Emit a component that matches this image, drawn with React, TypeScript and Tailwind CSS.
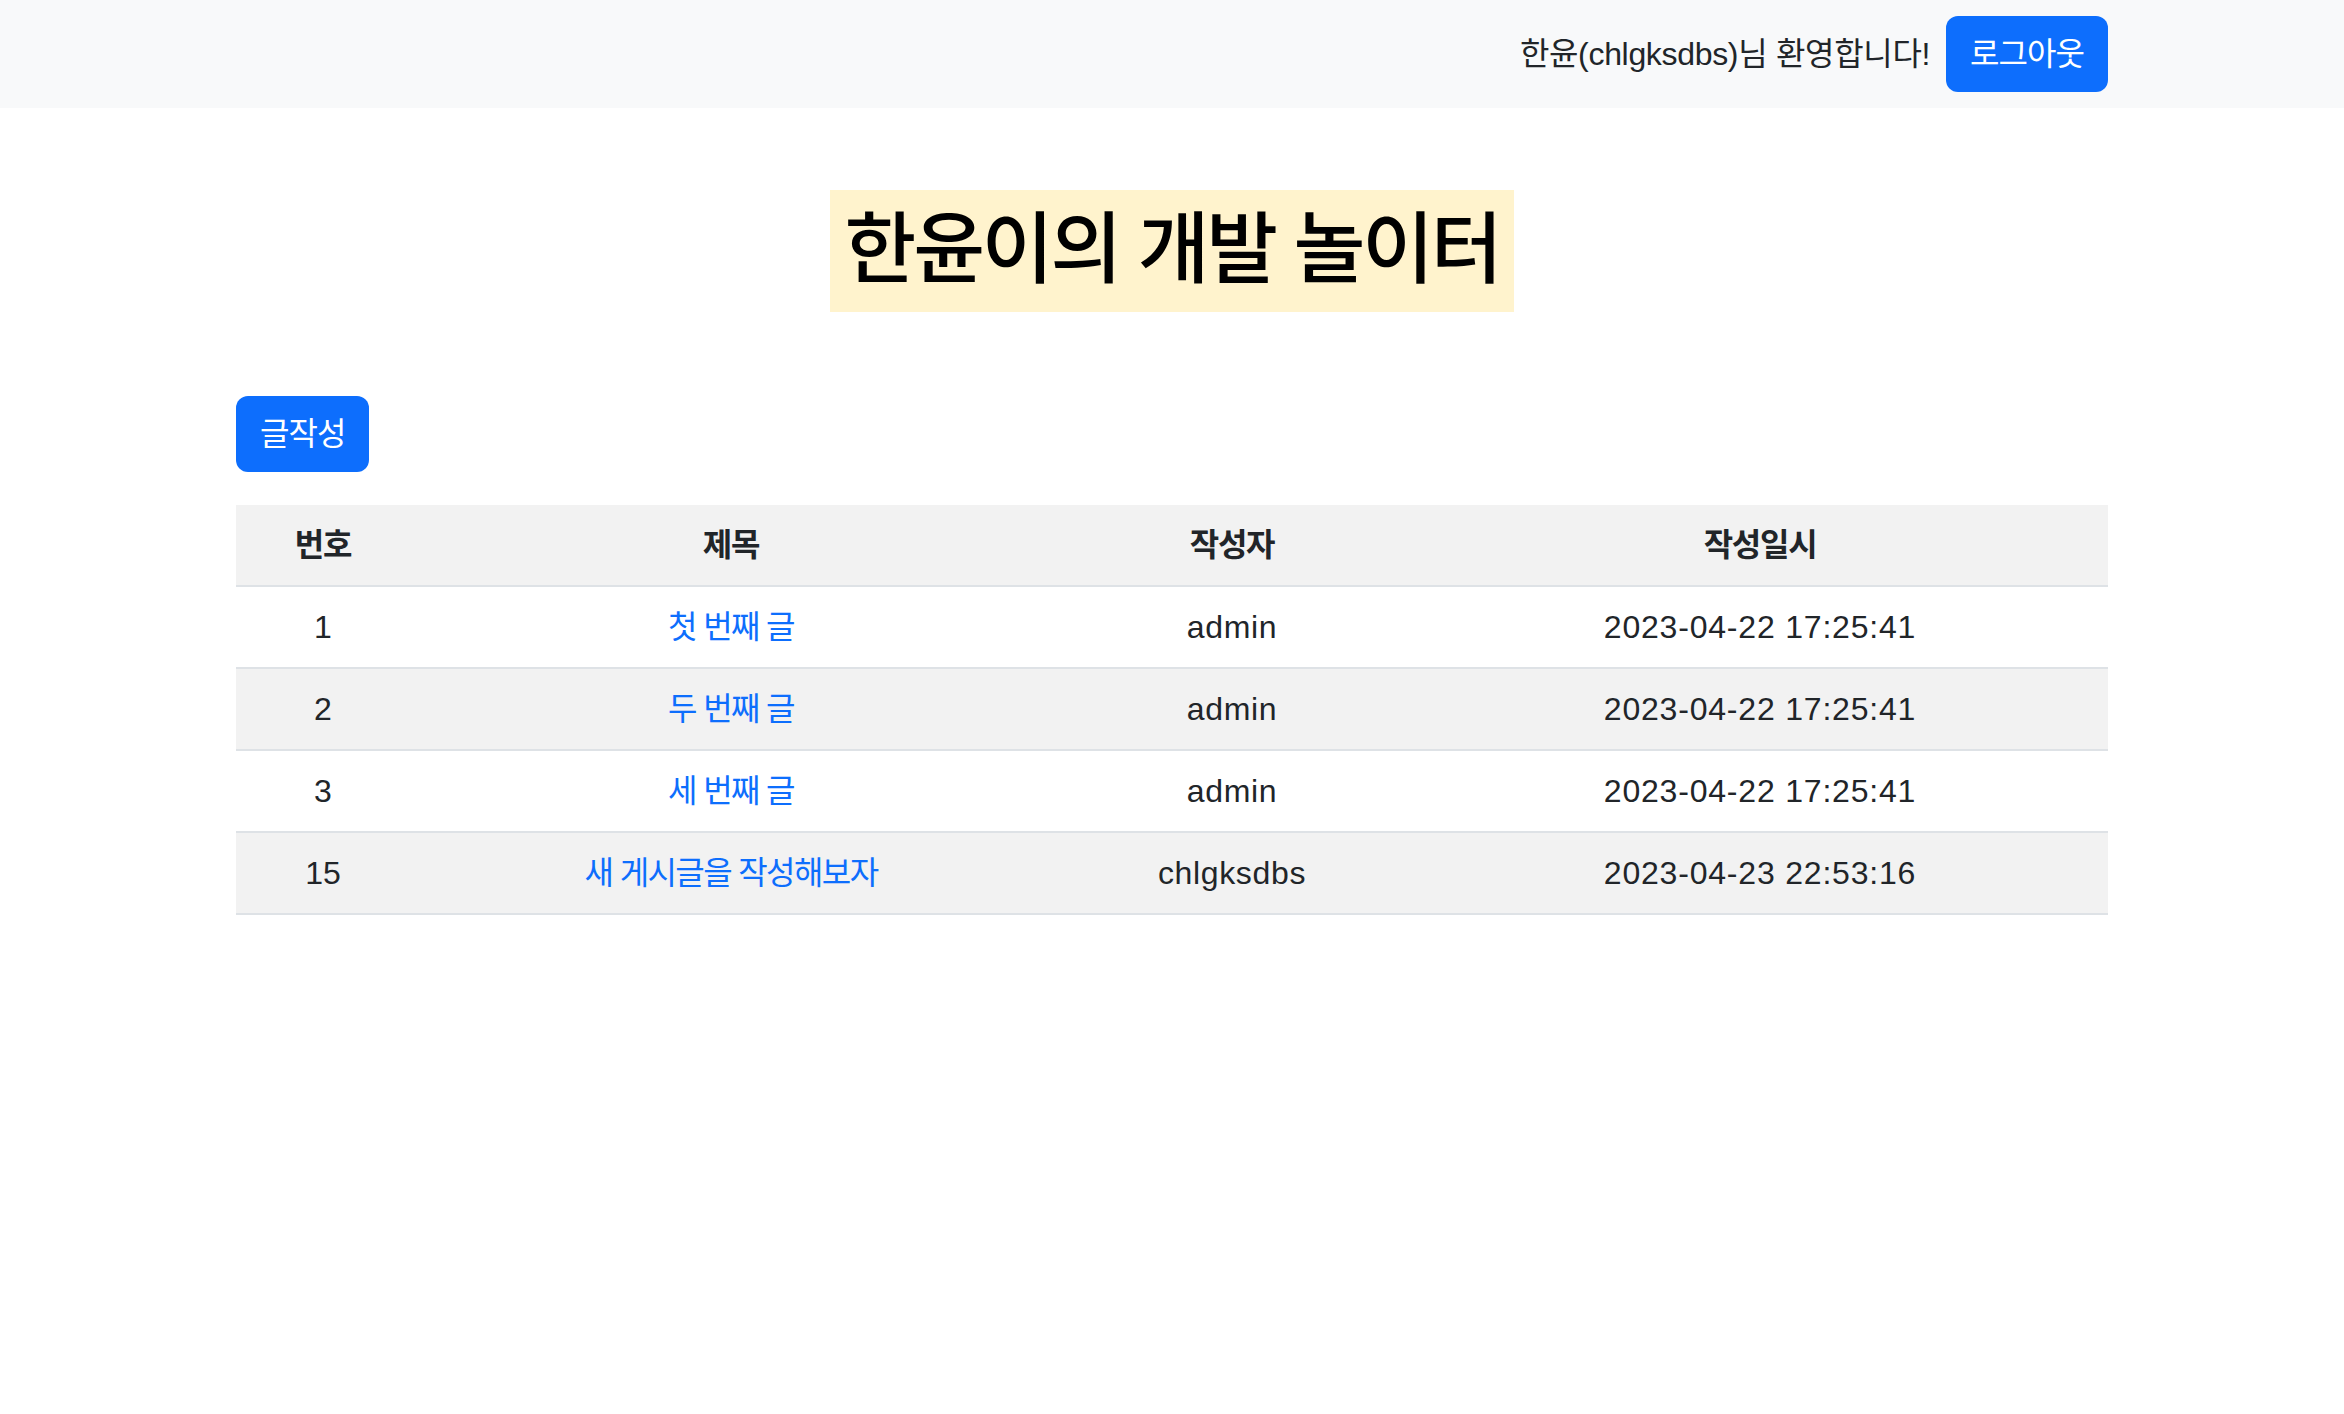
const posts = [
  { id: 1, title: '첫 번째 글', author: 'admin', date: '2023-04-22 17:25:41' },
  { id: 2, title: '두 번째 글', author: 'admin', date: '2023-04-22 17:25:41' },
  { id: 3, title: '세 번째 글', author: 'admin', date: '2023-04-22 17:25:41' },
  { id: 15, title: '새 게시글을 작성해보자', author: 'chlgksdbs', date: '2023-04-23 22:53:16' },
]

export default function App() {
  return (
    <div className="min-h-screen bg-white text-[32px] leading-[1.5] text-[#212529] [font-family:'Liberation_Sans','Noto_Sans_CJK_KR',sans-serif]">
      {/* Navbar */}
      <nav className="bg-[#f8f9fa] py-4">
        <div className="mx-auto flex w-[1920px] items-center justify-end gap-4 px-6">
          <span className="tracking-[-0.01em]">한윤(chlgksdbs)님 환영합니다!</span>
          <button className="h-[76px] rounded-[12px] bg-[#0d6efd] px-6 tracking-[-0.03em] text-white">로그아웃</button>
        </div>
      </nav>

      <div className="mx-auto w-[1920px] px-6">
        {/* Title */}
        <div className="mt-[82px] flex justify-center">
          <h1 className="bg-[#fff3cd] px-[15px] py-[14px] text-[78px] font-medium leading-[1.2] tracking-[-0.04em] text-black">
            한윤이의 개발 놀이터
          </h1>
        </div>

        <div className="mt-[84px]">
          <button className="h-[76px] rounded-[12px] bg-[#0d6efd] px-6 tracking-[-0.03em] text-white">글작성</button>
        </div>

        {/* Board table */}
        <table className="mt-[33px] w-full table-fixed border-collapse text-center">
          <colgroup>
            <col className="w-[174px]" />
            <col className="w-[642px]" />
            <col className="w-[360px]" />
            <col className="w-[696px]" />
          </colgroup>
          <thead>
            <tr className="border-b-2 border-[#dee2e6] bg-[#f2f2f2] font-bold tracking-[-0.04em]">
              <th className="py-4">번호</th>
              <th className="py-4">제목</th>
              <th className="py-4">작성자</th>
              <th className="py-4">작성일시</th>
            </tr>
          </thead>
          <tbody>
            {posts.map((p, i) => (
              <tr key={p.id} className={`border-b-2 border-[#dee2e6] ${i % 2 === 1 ? 'bg-[#f2f2f2]' : 'bg-white'}`}>
                <td className="py-4">{p.id}</td>
                <td className="py-4">
                  <a href="#" className="tracking-[-0.05em] text-[#0d6efd]">{p.title}</a>
                </td>
                <td className="py-4 tracking-[0.02em]">{p.author}</td>
                <td className="py-4 tracking-[0.025em]">{p.date}</td>
              </tr>
            ))}
          </tbody>
        </table>
      </div>
    </div>
  )
}
